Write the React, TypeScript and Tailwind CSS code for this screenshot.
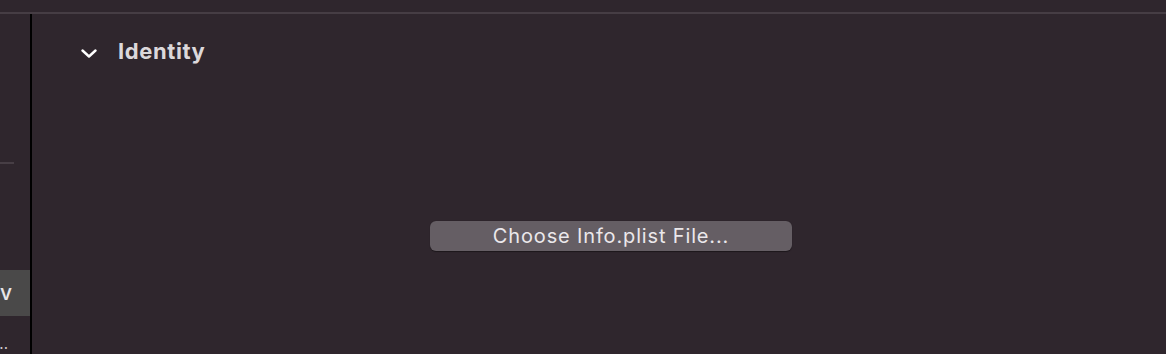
export default function App() {
  return (
    <div className="h-[354px] w-[1166px] overflow-hidden bg-[#2f262d] font-['Inter','Liberation_Sans',sans-serif] text-[#e3e0e3]">
      {/* top toolbar edge */}
      <div className="h-[12px]" />
      <div className="h-[2px] bg-[#463d44]" />

      <div className="flex h-[340px]">
        {/* sidebar, mostly clipped */}
        <div className="flex w-[30px] shrink-0 flex-col overflow-hidden">
          <div className="h-[148px]" />
          <div className="h-[2px] w-[14px] bg-[#473e45]" />
          <div className="h-[106px]" />
          <div className="flex h-[46px] shrink-0 items-center justify-end overflow-hidden whitespace-nowrap bg-[#4a4949] pr-[18px] text-[21px] font-medium text-[#e8e6e8]">
            Dev
          </div>
          <div className="flex h-[38px] shrink-0 items-end justify-end overflow-hidden whitespace-nowrap pb-[3px] pr-[22px] text-[15px] leading-none text-[#cfcbce]">
            Project...
          </div>
        </div>
        <div className="w-[2px] shrink-0 bg-black" />

        {/* main pane */}
        <div className="flex flex-1 flex-col">
          <div className="flex h-[75px] items-center pl-[49px] pb-[1px]">
            <svg width="16" height="9" viewBox="0 0 16 9" className="mt-[4px]">
              <path d="M1.5 1.5 L8 7.5 L14.5 1.5" fill="none" stroke="#ffffff" strokeWidth="2.4" strokeLinecap="round" strokeLinejoin="round" />
            </svg>
            <span className="ml-[21px] text-[22px] font-bold tracking-[0.6px] text-[#dcd8db]">Identity</span>
          </div>
          <div className="h-[132px]" />
          <div className="pl-[398px]">
            <button className="flex h-[30px] w-[362px] items-center justify-center rounded-[6px] bg-[#655e64] text-[20px] leading-none tracking-[0.85px] text-[#ebe8eb] shadow-[0_0.5px_1px_rgba(0,0,0,0.4)]">
              Choose Info.plist File...
            </button>
          </div>
        </div>
      </div>
    </div>
  );
}
